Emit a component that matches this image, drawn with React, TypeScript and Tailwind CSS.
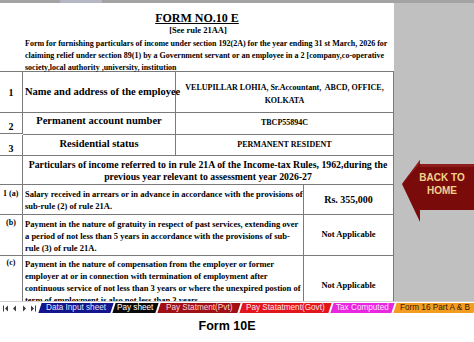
import React from "react";

const serif = { fontFamily: '"Liberation Serif", "DejaVu Serif", serif' };
const sans = { fontFamily: '"Liberation Sans", Arial, sans-serif' };

function BackArrow() {
  return (
    <svg width="80" height="64" viewBox="0 0 80 64" className="block">
      <polygon points="8,24 26,0 26,4 80,4 80,50 26,50 26,62" fill="#7a0b0b" />
      <polygon points="26,4 80,4 80,7 26,7" fill="#8f1d1d" />
      <polygon points="8,24 26,0 26,3" fill="#962323" />
    </svg>
  );
}

function NavArrows() {
  return (
    <svg width="38" height="13" viewBox="0 0 38 13" className="block">
      <g fill="#3a3a3a">
        <rect x="3" y="3.5" width="1" height="6" />
        <polygon points="8,3.5 5,6.5 8,9.5" />
        <polygon points="16,3.5 13,6.5 16,9.5" />
        <polygon points="23,3.5 26,6.5 23,9.5" />
        <polygon points="31,3.5 34,6.5 31,9.5" />
        <rect x="35" y="3.5" width="1" height="6" />
      </g>
    </svg>
  );
}

const tabs = [
  { label: "Data Input sheet", bg: "bg-[#14148c]", fg: "text-[#dfe6ff]", w: "w-[72px]" },
  { label: "Pay sheet", bg: "bg-[#0a0a0a]", fg: "text-white", w: "w-[43px]" },
  { label: "Pay Statment(Pvt)", bg: "bg-[#a00f14]", fg: "text-[#ffd6d6]", w: "w-[80px]" },
  { label: "Pay Statatment(Govt)", bg: "bg-[#e3141c]", fg: "text-[#ffe4e4]", w: "w-[89px]" },
  { label: "Tax Computed", bg: "bg-[#e826e0]", fg: "text-[#ffe6ff]", w: "w-[61px]" },
  { label: "Form 16 Part A & B", bg: "bg-[#f39c20]", fg: "text-[#3a2000]", w: "w-[80px]" },
];

export default function App() {
  const cell = "border-r border-b border-[#7a7a7a]";
  return (
    <div className="w-[474px] h-[342px] bg-white overflow-hidden relative" style={serif}>
      {/* top strip */}
      <div className="h-[3px] bg-[#a3a3a3] flex">
        <div className="w-[60px]" />
        <div className="w-[42px] bg-[#b4b8c4]" />
      </div>
      <div className="flex h-[298px]">
        {/* main sheet */}
        <div className="w-[394px] overflow-hidden text-black">
          <div className="h-[68px] flex flex-col">
            <div className="text-center pt-[9px] leading-[12px] text-[12px] font-bold underline">FORM NO.10 E</div>
            <div className="text-center text-[8.5px] font-bold leading-[12px] pl-[2px]">[See rule 21AA]</div>
            <div className="pl-[25px] pt-[2px] text-[8px] font-bold leading-[12px] whitespace-nowrap">
              <div>Form for furnishing particulars of income under section 192(2A) for the year ending 31 st March, 2026 for</div>
              <div>claiming relief under section 89(1) by a Government servant or an employee in a 2 [company,co-operative</div>
              <div>society,local authority ,university, institution</div>
            </div>
          </div>
          <div className="grid grid-cols-[23px_153px_128px_90px] border-t border-[#7a7a7a]">
            {/* row 1 */}
            <div className={`${cell} h-[41px] flex items-center justify-center text-[10px] font-bold`}>1</div>
            <div className={`${cell} flex items-center pl-[2px] text-[10.5px] font-bold whitespace-nowrap`}>Name and address of the employee</div>
            <div className={`${cell} col-span-2 flex flex-col items-center pt-[9px] text-[8px] font-bold leading-[13px] text-center whitespace-nowrap`}>
              <div>VELUPILLAR LOHIA, Sr.Accountant,&nbsp; ABCD, OFFICE,</div>
              <div>KOLKATA</div>
            </div>
            {/* row 2 */}
            <div className={`${cell} h-[21px] flex items-end justify-center text-[10px] font-bold leading-[12px]`}>2</div>
            <div className={`${cell} flex items-center justify-center text-[10.5px] font-bold pb-[5px] whitespace-nowrap`}>Permanent account number</div>
            <div className={`${cell} col-span-2 flex items-center justify-center text-[8px] font-bold`}>TBCP55894C</div>
            {/* row 3 */}
            <div className={`${cell} h-[21px] flex items-end justify-center text-[10px] font-bold leading-[12px]`}>3</div>
            <div className={`${cell} flex items-center justify-center text-[10.5px] font-bold pb-[2px]`}>Residential status</div>
            <div className={`${cell} col-span-2 flex items-center justify-center text-[8px] font-bold`}>PERMANENT RESIDENT</div>
            {/* row 4 */}
            <div className={`${cell} h-[29px]`} />
            <div className={`${cell} col-span-3 text-[9.8px] font-bold leading-[12px] text-center pt-[3px] whitespace-nowrap`}>
              <div>Particulars of income referred to in rule 21A of the Income-tax Rules, 1962,during the</div>
              <div>previous year relevant to assessment year 2026-27</div>
            </div>
            {/* row a */}
            <div className={`${cell} h-[30px] text-[8px] font-bold pl-[3px] pt-[4px] leading-[10px] whitespace-nowrap`}>1 (a)</div>
            <div className={`${cell} col-span-2 text-[8.5px] font-bold leading-[12px] pl-[2px] pt-[3px]`}>
              Salary received in arrears or in advance in accordance with the provisions of sub-rule (2) of rule 21A.
            </div>
            <div className={`${cell} flex items-center justify-center text-[10px] font-bold`}>Rs. 355,000</div>
            {/* row b */}
            <div className={`${cell} h-[41px] text-[8px] font-bold text-center pt-[3px] leading-[10px]`}>(b)</div>
            <div className={`${cell} col-span-2 text-[8.5px] font-bold leading-[12px] pl-[2px] pt-[3px]`}>
              Payment in the nature of gratuity in respect of past services, extending over a period of not less than 5 years in accordance with the provisions of sub-rule (3) of rule 21A.
            </div>
            <div className={`${cell} flex items-center justify-center text-[8.5px] font-bold`}>Not Applicable</div>
            {/* row c */}
            <div className={`${cell} h-[60px] text-[8px] font-bold text-center pt-[2px] leading-[10px]`}>(c)</div>
            <div className={`${cell} col-span-2 text-[8.5px] font-bold leading-[12px] pl-[2px] pt-[2px]`}>
              Payment in the nature of compensation from the employer or former employer at or in connection with termination of employment after continuous service of not less than 3 years or where the unexpired postion of term of employment is also not less than 3 years
            </div>
            <div className={`${cell} flex items-start justify-center pt-[23px] text-[8.5px] font-bold`}>Not Applicable</div>
          </div>
        </div>
        {/* gray side */}
        <div className="flex-1 bg-[#c0c0c0] pt-[157px] relative">
          <div className="relative w-[80px]">
            <BackArrow />
            <div className="absolute left-[20px] top-[11px] w-[56px] text-center text-[10px] font-bold leading-[13px] text-[#f2d28a]" style={sans}>
              BACK TO<br />HOME
            </div>
          </div>
        </div>
      </div>
      {/* tab bar */}
      <div className="h-[13px] bg-white flex items-center border-t border-[#d0d0d0]" style={sans}>
        <div className="w-[38px] shrink-0">
          <NavArrows />
        </div>
        {tabs.map((t) => (
          <div key={t.label} className={`${t.bg} ${t.fg} ${t.w} shrink-0 h-[10px] -skew-x-[18deg] ml-[2px] flex items-center justify-center overflow-hidden`}>
            <span className="skew-x-[18deg] text-[8.2px] leading-none whitespace-nowrap">{t.label}</span>
          </div>
        ))}
      </div>
      <div className="flex justify-center pt-[5px] pr-[20px]">
        <span className="text-[12.5px] font-bold leading-[14px]" style={sans}>Form 10E</span>
      </div>
    </div>
  );
}
